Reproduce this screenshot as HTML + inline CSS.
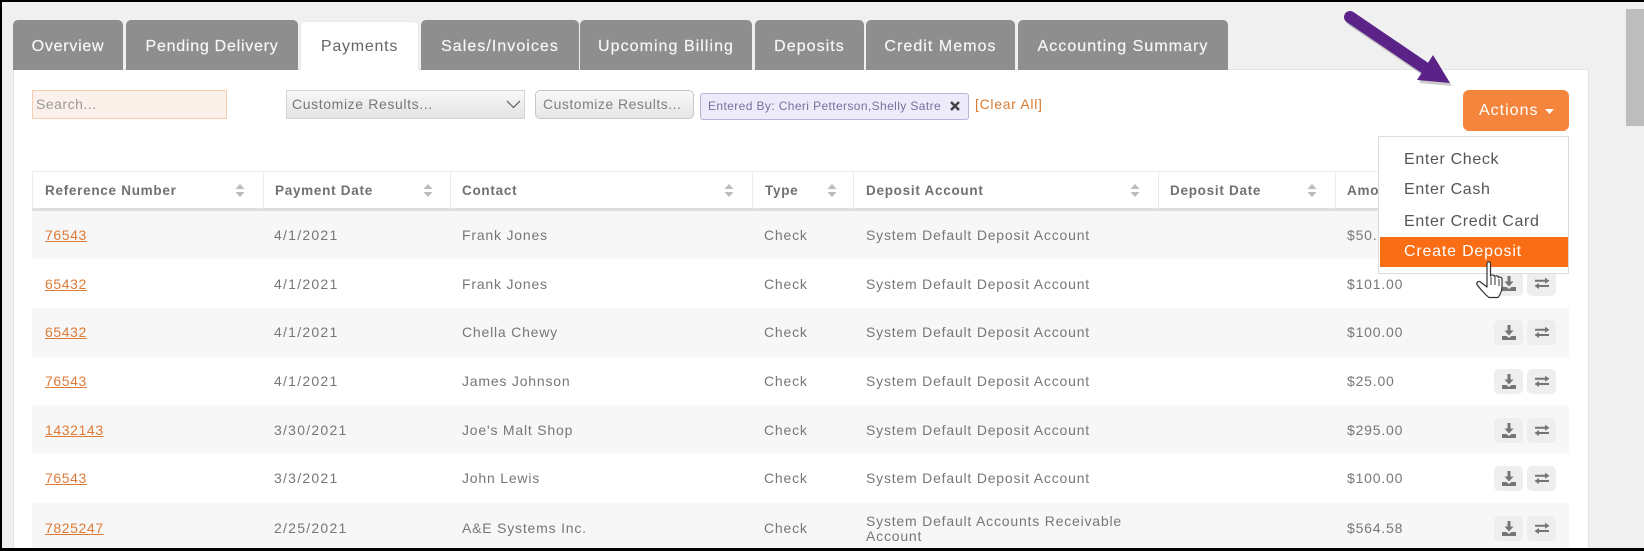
<!DOCTYPE html>
<html><head><meta charset="utf-8"><style>
*{box-sizing:border-box}
html,body{margin:0;padding:0;width:1644px;height:551px;overflow:hidden;background:#f0f0f0}
body{position:relative;font-family:"Liberation Sans",sans-serif;color:#757575;font-size:14px}
.a{position:absolute;white-space:nowrap}
.tab{position:absolute;top:20px;height:50px;background:#8e8e8e;color:#f6f6f6;border-radius:5px 5px 0 0;font-size:16px;line-height:53px;text-align:center;letter-spacing:1.05px;-webkit-text-stroke:.2px #f6f6f6}
.th{position:absolute;top:172px;height:37px;line-height:38px;font-weight:bold;font-size:13.5px;color:#707070;letter-spacing:.72px;white-space:nowrap}
.sep{position:absolute;top:171px;height:38px;width:1px;background:#ececec}
.sort{position:absolute;top:184px;width:10px;height:13px}
.row{position:absolute;left:32px;width:1537px}
.s{background:#f7f7f7}
.c{position:absolute;white-space:nowrap;letter-spacing:.8px;font-size:14px;color:#777}
.d{letter-spacing:1.25px}
.l{color:#dd7a36;text-decoration:underline;letter-spacing:.6px}
.b{position:absolute;width:29px;height:25px;background:#eeeeee;border-radius:5px}
.b svg{position:absolute;left:7px;top:5px}
.m{position:absolute;left:1404px;font-size:16px;letter-spacing:.65px;color:#555;white-space:nowrap}
</style></head><body>
<div class="a" style="left:0;top:0;width:1644px;height:2px;background:#000"></div>
<div class="a" style="left:0;top:0;width:2px;height:551px;background:#000"></div>
<div class="a" style="left:1626px;top:9px;width:18px;height:117px;background:#bdbdbd"></div>
<div class="a" style="left:13px;top:69px;width:1576px;height:482px;background:#fff;border:1px solid #e4e4e4"></div>

<div class="tab" style="left:13px;width:110px;letter-spacing:.75px">Overview</div>
<div class="tab" style="left:126px;width:172px;letter-spacing:.75px">Pending Delivery</div>
<div class="tab" style="left:300px;top:21px;height:49px;width:119px;background:#fff;color:#666;line-height:50px;border:1px solid #e8e8e8;border-bottom:0;letter-spacing:.75px;-webkit-text-stroke:0">Payments</div>
<div class="tab" style="left:421px;width:158px">Sales/Invoices</div>
<div class="tab" style="left:580px;width:172px">Upcoming Billing</div>
<div class="tab" style="left:755px;width:109px">Deposits</div>
<div class="tab" style="left:866px;width:149px">Credit Memos</div>
<div class="tab" style="left:1018px;width:210px">Accounting Summary</div>

<div class="a" style="left:32px;top:90px;width:195px;height:29px;background:#fcf0ea;border:1px solid #f5cdb3;line-height:27px;padding-left:3px;color:#999;letter-spacing:.5px">Search...</div>
<div class="a" style="left:286px;top:90px;width:239px;height:29px;background:linear-gradient(#f8f8f8,#e3e3e3);border:1px solid #d4d4d4;line-height:27px;padding-left:5px;color:#777;letter-spacing:.62px">Customize Results...
<svg style="position:absolute;left:219px;top:9px" width="15" height="9" viewBox="0 0 15 9"><path d="M1 1l6.500 6.500L14 1" fill="none" stroke="#666" stroke-width="1.300"/></svg></div>
<div class="a" style="left:535px;top:90px;width:159px;height:29px;background:linear-gradient(#f8f8f8,#e6e6e6);border:1px solid #c8c8c8;border-radius:5px;line-height:27px;padding-left:7px;color:#808080;letter-spacing:.5px">Customize Results...</div>
<div class="a" style="left:700px;top:93px;width:269px;height:27px;background:#edebfa;border:1px solid #b8b3d8;border-radius:3px;line-height:24px;padding-left:7px;color:#7a6f9f;font-size:12px;letter-spacing:.39px">Entered By: Cheri Petterson,Shelly Satre
<svg style="position:absolute;left:249px;top:7px" width="10" height="10" viewBox="0 0 10 10"><path d="M1 1l8 8M9 1l-8 8" stroke="#444" stroke-width="2.600"/></svg></div>
<div class="a" style="left:975px;top:95px;color:#d97b30;letter-spacing:.7px;line-height:18px">[Clear All]</div>

<div class="a" style="left:32px;top:171px;width:1537px;height:40px;background:#fff;border-top:1px solid #ececec;border-bottom:3px solid #dedede"></div>
<div class="sep" style="left:32px"></div><div class="sep" style="left:263px"></div><div class="sep" style="left:450px"></div><div class="sep" style="left:752px"></div><div class="sep" style="left:853px"></div><div class="sep" style="left:1158px"></div><div class="sep" style="left:1335px"></div>
<div class="th" style="left:45px">Reference Number</div>
<div class="th" style="left:275px">Payment Date</div>
<div class="th" style="left:462px">Contact</div>
<div class="th" style="left:765px">Type</div>
<div class="th" style="left:866px">Deposit Account</div>
<div class="th" style="left:1170px">Deposit Date</div>
<div class="th" style="left:1347px">Amount</div>
<svg class="sort" style="left:235px" viewBox="0 0 10 13"><path d="M5 0l4.500 5h-9zM5 13l4.500-5h-9z" fill="#bbb"/></svg>
<svg class="sort" style="left:423px" viewBox="0 0 10 13"><path d="M5 0l4.500 5h-9zM5 13l4.500-5h-9z" fill="#bbb"/></svg>
<svg class="sort" style="left:724px" viewBox="0 0 10 13"><path d="M5 0l4.500 5h-9zM5 13l4.500-5h-9z" fill="#bbb"/></svg>
<svg class="sort" style="left:827px" viewBox="0 0 10 13"><path d="M5 0l4.500 5h-9zM5 13l4.500-5h-9z" fill="#bbb"/></svg>
<svg class="sort" style="left:1130px" viewBox="0 0 10 13"><path d="M5 0l4.500 5h-9zM5 13l4.500-5h-9z" fill="#bbb"/></svg>
<svg class="sort" style="left:1307px" viewBox="0 0 10 13"><path d="M5 0l4.500 5h-9zM5 13l4.500-5h-9z" fill="#bbb"/></svg>

<div class="row s" style="top:211px;height:48px"></div>
<div class="row s" style="top:308px;height:49px"></div>
<div class="row s" style="top:405px;height:48px"></div>
<div class="row s" style="top:503px;height:45px"></div>

<div class="c l" style="left:45px;top:227px">76543</div><div class="c d" style="left:274px;top:227px">4/1/2021</div><div class="c" style="left:462px;top:227px">Frank Jones</div><div class="c" style="left:764px;top:227px">Check</div><div class="c" style="left:866px;top:227px">System Default Deposit Account</div><div class="c" style="left:1347px;top:227px">$50.00</div>
<div class="c l" style="left:45px;top:276px">65432</div><div class="c d" style="left:274px;top:276px">4/1/2021</div><div class="c" style="left:462px;top:276px">Frank Jones</div><div class="c" style="left:764px;top:276px">Check</div><div class="c" style="left:866px;top:276px">System Default Deposit Account</div><div class="c" style="left:1347px;top:276px">$101.00</div>
<div class="c l" style="left:45px;top:324px">65432</div><div class="c d" style="left:274px;top:324px">4/1/2021</div><div class="c" style="left:462px;top:324px">Chella Chewy</div><div class="c" style="left:764px;top:324px">Check</div><div class="c" style="left:866px;top:324px">System Default Deposit Account</div><div class="c" style="left:1347px;top:324px">$100.00</div>
<div class="c l" style="left:45px;top:373px">76543</div><div class="c d" style="left:274px;top:373px">4/1/2021</div><div class="c" style="left:462px;top:373px">James Johnson</div><div class="c" style="left:764px;top:373px">Check</div><div class="c" style="left:866px;top:373px">System Default Deposit Account</div><div class="c" style="left:1347px;top:373px">$25.00</div>
<div class="c l" style="left:45px;top:422px">1432143</div><div class="c d" style="left:274px;top:422px">3/30/2021</div><div class="c" style="left:462px;top:422px">Joe's Malt Shop</div><div class="c" style="left:764px;top:422px">Check</div><div class="c" style="left:866px;top:422px">System Default Deposit Account</div><div class="c" style="left:1347px;top:422px">$295.00</div>
<div class="c l" style="left:45px;top:470px">76543</div><div class="c d" style="left:274px;top:470px">3/3/2021</div><div class="c" style="left:462px;top:470px">John Lewis</div><div class="c" style="left:764px;top:470px">Check</div><div class="c" style="left:866px;top:470px">System Default Deposit Account</div><div class="c" style="left:1347px;top:470px">$100.00</div>
<div class="c l" style="left:45px;top:520px">7825247</div><div class="c d" style="left:274px;top:520px">2/25/2021</div><div class="c" style="left:462px;top:520px">A&amp;E Systems Inc.</div><div class="c" style="left:764px;top:520px">Check</div><div class="c" style="left:866px;top:514px;line-height:15px">System Default Accounts Receivable<br>Account</div><div class="c" style="left:1347px;top:520px">$564.58</div>

<svg width="0" height="0" style="position:absolute"><defs>
<g id="dl"><path d="M6.500 0h3v5.500h3L8 10.500 3.500 5.500h3z" fill="#757575"/><path d="M1 11h4.500L8 13l2.500-2H15v4H1z" fill="#757575"/></g>
<g id="sw"><path d="M1 3.800h10V1.800L15.500 4.800 11 7.800V5.800H1zM15 9H5V7L.5 10 5 13V11H15z" fill="#757575"/></g>
</defs></svg>

<div class="b" style="left:1494px;top:271px"><svg width="16" height="16"><use href="#dl"/></svg></div><div class="b" style="left:1527px;top:271px"><svg width="16" height="16"><use href="#sw"/></svg></div>
<div class="b" style="left:1494px;top:320px"><svg width="16" height="16"><use href="#dl"/></svg></div><div class="b" style="left:1527px;top:320px"><svg width="16" height="16"><use href="#sw"/></svg></div>
<div class="b" style="left:1494px;top:369px"><svg width="16" height="16"><use href="#dl"/></svg></div><div class="b" style="left:1527px;top:369px"><svg width="16" height="16"><use href="#sw"/></svg></div>
<div class="b" style="left:1494px;top:418px"><svg width="16" height="16"><use href="#dl"/></svg></div><div class="b" style="left:1527px;top:418px"><svg width="16" height="16"><use href="#sw"/></svg></div>
<div class="b" style="left:1494px;top:466px"><svg width="16" height="16"><use href="#dl"/></svg></div><div class="b" style="left:1527px;top:466px"><svg width="16" height="16"><use href="#sw"/></svg></div>
<div class="b" style="left:1494px;top:516px"><svg width="16" height="16"><use href="#dl"/></svg></div><div class="b" style="left:1527px;top:516px"><svg width="16" height="16"><use href="#sw"/></svg></div>

<div class="a" style="left:1463px;top:90px;width:106px;height:41px;background:#f5843c;border-radius:6px;color:#fff;font-size:16px;line-height:42px;padding-left:16px;letter-spacing:1px">Actions
<svg style="position:absolute;left:82px;top:19px" width="9" height="5"><path d="M0 0h9L4.500 5z" fill="#fff"/></svg></div>

<div class="a" style="left:1378px;top:136px;width:191px;height:138px;background:#fff;border:1px solid #ddd"></div>
<div class="m" style="top:151px">Enter Check</div>
<div class="m" style="top:181px">Enter Cash</div>
<div class="m" style="top:213px">Enter Credit Card</div>
<div class="a" style="left:1380px;top:237px;width:188px;height:30px;background:#f96d15"></div>
<div class="m" style="top:243px;color:#fff;letter-spacing:.8px">Create Deposit</div>

<svg class="a" style="left:1475px;top:258px" width="34" height="42" viewBox="0 0 34 42"><path d="M12 6c0-3 3.500-3 3.500 0v12c1-1.500 3.500-1.500 4 .5 1-1 3.500-1 4 1 1-.8 3.500-.5 3.500 1.500v8c0 4-2.500 9-4 10.500H14c-3-2-10-10-12-13-1-2 1.500-4 3.500-2.500L12 29z" fill="#fff" stroke="#333" stroke-width="1.200" stroke-linejoin="round"/><path d="M16 19v8M20 19v8M24 21v7" stroke="#333" stroke-width="1"/></svg>

<svg class="a" style="left:1340px;top:6px;overflow:visible" width="120" height="85" viewBox="0 0 120 85"><g fill="#000" opacity=".2" transform="translate(2 3)"><path d="M10 11L88 64" stroke="#000" stroke-width="12" stroke-linecap="round"/><path d="M110 77L93 49L77 74z"/></g><path d="M10 11L88 64" stroke="#5b2288" stroke-width="12" stroke-linecap="round"/><path d="M110 77L93 49L77 74z" fill="#5b2288"/></svg>

<div class="a" style="left:0;top:548px;width:1644px;height:3px;background:#000"></div>
</body></html>
